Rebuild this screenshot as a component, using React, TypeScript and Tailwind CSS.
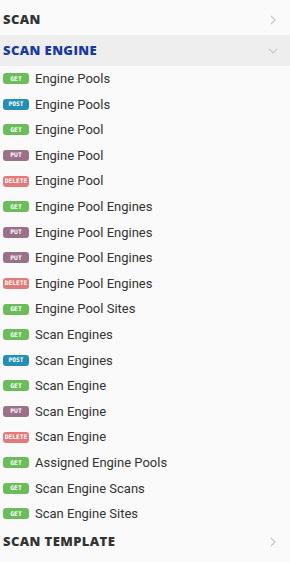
const METHOD_STYLES: Record<string, string> = {
  GET: 'bg-[#6bbd5b]',
  POST: 'bg-[#248fb2]',
  PUT: 'bg-[#9b708b]',
  DELETE: 'bg-[#e27a7a]',
};

const endpoints: [string, string][] = [
  ['GET', 'Engine Pools'],
  ['POST', 'Engine Pools'],
  ['GET', 'Engine Pool'],
  ['PUT', 'Engine Pool'],
  ['DELETE', 'Engine Pool'],
  ['GET', 'Engine Pool Engines'],
  ['PUT', 'Engine Pool Engines'],
  ['PUT', 'Engine Pool Engines'],
  ['DELETE', 'Engine Pool Engines'],
  ['GET', 'Engine Pool Sites'],
  ['GET', 'Scan Engines'],
  ['POST', 'Scan Engines'],
  ['GET', 'Scan Engine'],
  ['PUT', 'Scan Engine'],
  ['DELETE', 'Scan Engine'],
  ['GET', 'Assigned Engine Pools'],
  ['GET', 'Scan Engine Scans'],
  ['GET', 'Scan Engine Sites'],
];

function Chevron({ open }: { open?: boolean }) {
  return (
    <svg width="10" height="10" viewBox="0 0 10 10" className="text-[#c8c8c8]">
      {open ? (
        <path d="M1 3l4 4 4-4" fill="none" stroke="currentColor" strokeWidth="1.2" />
      ) : (
        <path d="M3 1l4 4-4 4" fill="none" stroke="currentColor" strokeWidth="1.2" />
      )}
    </svg>
  );
}

function SectionHeader({ label, open }: { label: string; open?: boolean }) {
  return (
    <div
      className={`flex h-[31px] items-center justify-between pl-[3px] pr-[12px] ${
        open ? 'bg-[#eeeeee] text-[#1b3aa0]' : 'text-[#333333]'
      }`}
    >
      <span className="font-['Open_Sans',sans-serif] text-[13px] font-extrabold tracking-[0.4px]">
        {label}
      </span>
      <Chevron open={open} />
    </div>
  );
}

export default function App() {
  return (
    <div className="h-[562px] w-[290px] overflow-hidden bg-[#fafafa] pt-[4px] font-['Roboto',sans-serif]">
      <SectionHeader label="SCAN" />
      <SectionHeader label="SCAN ENGINE" open />
      <ul>
        {endpoints.map(([method, name], i) => (
          <li key={i} className="flex h-[25.6px] items-center gap-[6px] pl-[3px]">
            <span
              className={`flex h-[11px] w-[26px] items-center justify-center rounded-[3px] font-['DejaVu_Sans_Mono',monospace] text-[6.3px] font-bold leading-none text-white ${METHOD_STYLES[method]}`}
            >
              {method}
            </span>
            <span className="text-[13px] text-[#333333]">{name}</span>
          </li>
        ))}
      </ul>
      <SectionHeader label="SCAN TEMPLATE" />
    </div>
  );
}
